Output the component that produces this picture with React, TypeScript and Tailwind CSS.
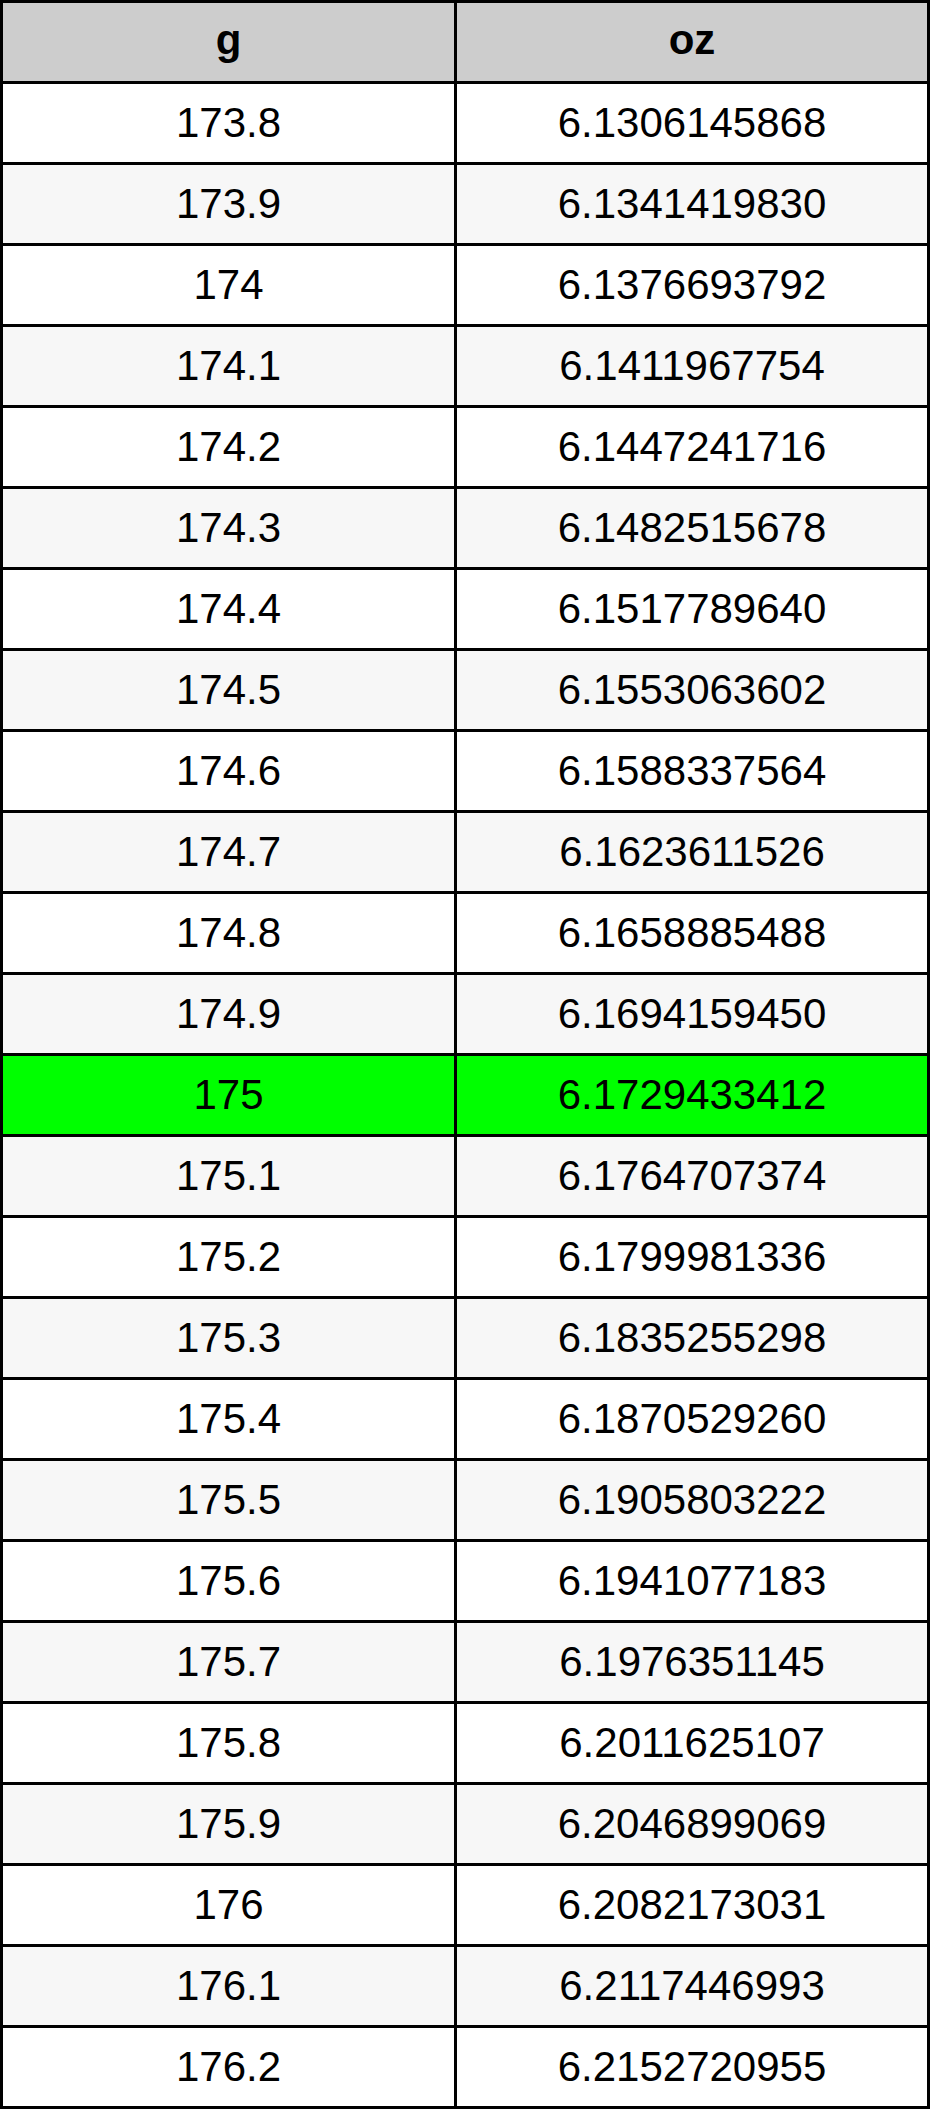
import React from 'react';

const rows: [string, string][] = [
  ['173.8', '6.1306145868'],
  ['173.9', '6.1341419830'],
  ['174', '6.1376693792'],
  ['174.1', '6.1411967754'],
  ['174.2', '6.1447241716'],
  ['174.3', '6.1482515678'],
  ['174.4', '6.1517789640'],
  ['174.5', '6.1553063602'],
  ['174.6', '6.1588337564'],
  ['174.7', '6.1623611526'],
  ['174.8', '6.1658885488'],
  ['174.9', '6.1694159450'],
  ['175', '6.1729433412'],
  ['175.1', '6.1764707374'],
  ['175.2', '6.1799981336'],
  ['175.3', '6.1835255298'],
  ['175.4', '6.1870529260'],
  ['175.5', '6.1905803222'],
  ['175.6', '6.1941077183'],
  ['175.7', '6.1976351145'],
  ['175.8', '6.2011625107'],
  ['175.9', '6.2046899069'],
  ['176', '6.2082173031'],
  ['176.1', '6.2117446993'],
  ['176.2', '6.2152720955'],
];

const cell = 'h-[81px] flex items-center justify-center border-r-[3px] border-b-[3px] border-black';

export default function App() {
  return (
    <div className="bg-white min-h-[2115px]">
      <div className="w-[930px] border-t-[3px] border-l-[3px] border-black text-black text-[42px] leading-none font-['Liberation_Sans',Arial,sans-serif]">
        <div className="grid grid-cols-[454px_473px] bg-[#cdcdcd] font-bold">
          <div className={`${cell} pb-[5px]`}>g</div>
          <div className={`${cell} pb-[5px]`}>oz</div>
        </div>
        {rows.map(([g, oz], i) => {
          const bg = g === '175' ? 'bg-[#00ff00]' : i % 2 === 1 ? 'bg-[#f7f7f7]' : 'bg-white';
          return (
            <div key={g} className={`grid grid-cols-[454px_473px] ${bg}`}>
              <div className={cell}>{g}</div>
              <div className={cell}>{oz}</div>
            </div>
          );
        })}
      </div>
    </div>
  );
}
